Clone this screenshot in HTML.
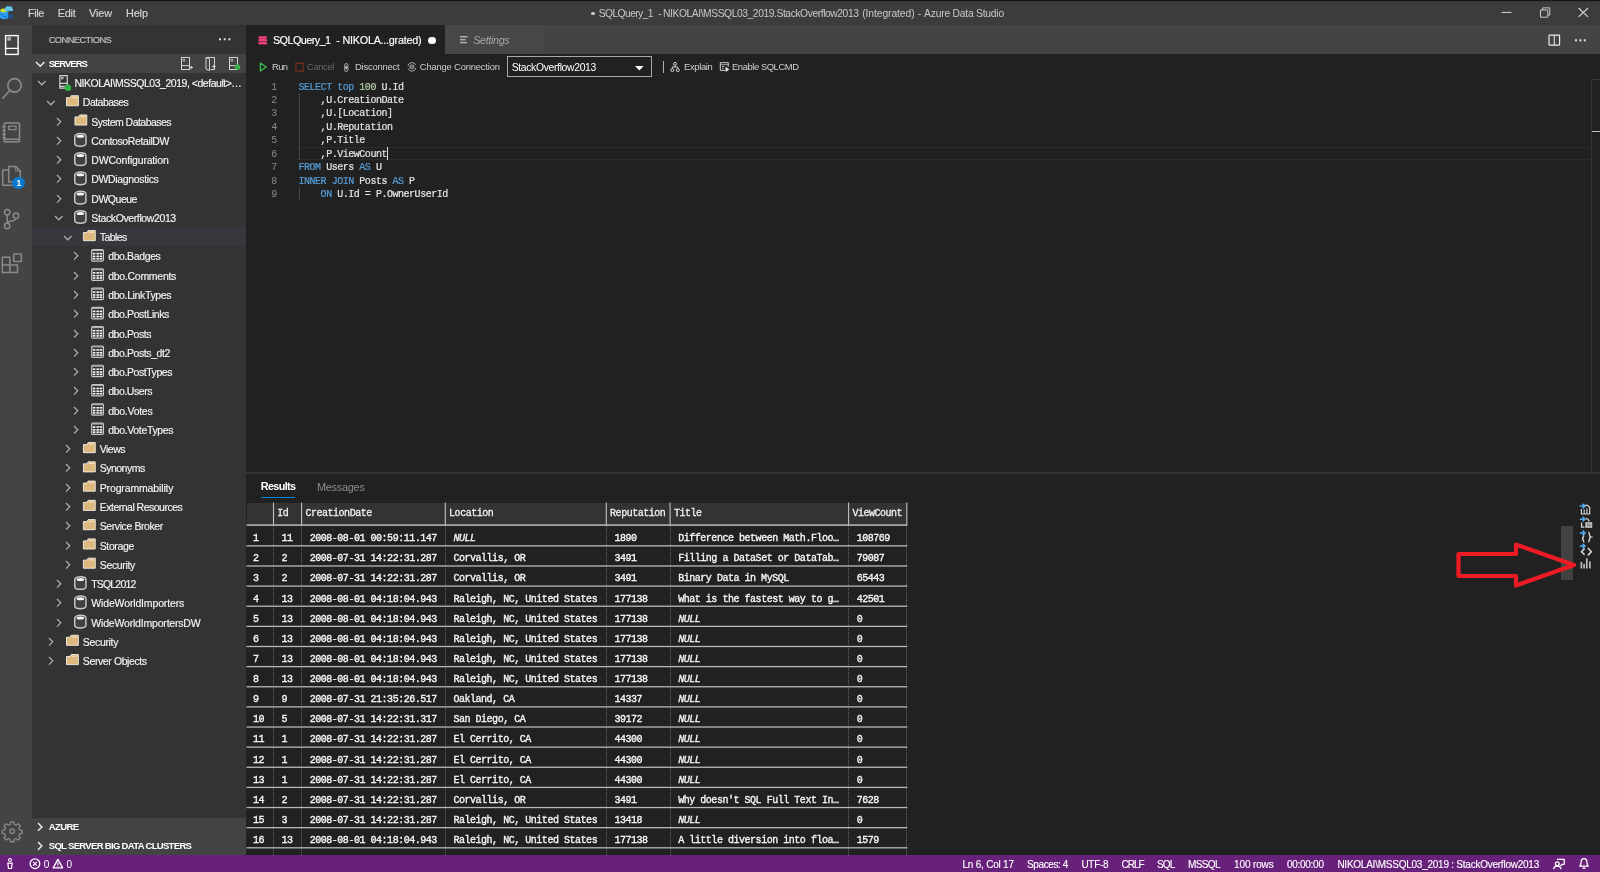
<!DOCTYPE html>
<html lang="en"><head><meta charset="utf-8"><title>Azure Data Studio</title>
<style>
html,body{margin:0;padding:0;background:#212121;}
body{width:1600px;height:872px;position:relative;overflow:hidden;font-family:'Liberation Sans', sans-serif;}
#app{position:absolute;left:0;top:0;width:1600px;height:872px;will-change:transform;}
#app div{position:absolute;box-sizing:border-box;}
#app svg{position:absolute;overflow:visible;}
#app span.t{position:absolute;white-space:pre;line-height:1;}
#app span.m{font-family:'Liberation Mono', monospace;}
</style></head><body><div id="app">
<div style="left:0px;top:0px;width:1600px;height:872px;background:#212121;"></div>
<div style="left:0px;top:0px;width:1600px;height:24.6px;background:#3c3c3c;"></div>
<div style="left:0px;top:0px;width:1600px;height:1px;background:#151515;"></div>
<div style="left:0px;top:1px;width:1600px;height:1px;background:#333333;"></div>
<div style="left:0px;top:24.6px;width:32px;height:830.4px;background:#444444;"></div>
<div style="left:32px;top:24.6px;width:214.2px;height:830.4px;background:#333333;"></div>
<div style="left:32px;top:54px;width:214.3px;height:18.7px;background:#434343;"></div>
<div style="left:246.2px;top:24.5px;width:1353.8px;height:29.1px;background:#444444;"></div>
<div style="left:246.2px;top:24.5px;width:198.9px;height:29.1px;background:#212121;"></div>
<div style="left:445.1px;top:24.5px;width:100.4px;height:29.1px;background:#474747;"></div>
<div style="left:545.2px;top:24.5px;width:1px;height:29.1px;background:#3e3e3e;"></div>
<div style="left:0px;top:854.6px;width:1600px;height:17.4px;background:#68217a;"></div>
<div style="left:591.300px;top:11.600px;width:3.800px;height:3.800px;border-radius:50%;background:#c8c8c8"></div>
<svg style="left:0;top:0" width="1600" height="30" viewBox="0 0 1600 30" fill="none" stroke="#d8d8d8" stroke-width="1"><path d="M1501.700 12.400h9.700"/><path d="M1540.500 10h7.300v7.200h-7.300z M1542.600 10v-2.100h7.200v7.200h-2" stroke-width="0.900" stroke-linejoin="round"/><path d="M1578.600 8l9.400 8.800 M1588 8l-9.400 8.800" stroke-width="1.100"/></svg>
<svg style="left:0;top:0" width="16" height="24" viewBox="0 0 16 24"><path d="M0 11.500v5.800c0 1.200 1.900 1.900 4.100 1.900s4.200-.7 4.200-1.900v-5.800z" fill="#2a9df4"/><ellipse cx="3.700" cy="10.500" rx="3.400" ry="1.900" fill="#d8e61e"/><path d="M0 12c.6 1 2.200 1.400 4.100 1.400s3.600-.4 4.200-1.400v-1.200c-.6 1-2.300 1.500-4.200 1.500s-3.500-.5-4.100-1.500z" fill="#3aa6f5"/><path d="M2 14.300v1.600 M3.500 16.800h3" stroke="#1b62b8" stroke-width="0.900" fill="none"/><path d="M5.600 11c-1.700 0-2-2.300-.3-2.700 0-2.200 2.700-3.200 4-1.700 1.800-1 3.600.4 3.100 2.100 1.300.4 1 2.300-.4 2.300z" fill="#62c1ea"/><path d="M10.600 14l2.200 1.250v2.500l-2.200 1.250-2.200-1.250v-2.500z" fill="#1558b0"/><circle cx="10.600" cy="16.500" r="0.900" fill="#3c3c3c"/></svg>
<svg style="left:0;top:25px" width="32" height="830" viewBox="0 25 32 830" fill="none" stroke="#8a8a8a" stroke-width="1.500" stroke-linejoin="round" stroke-linecap="round"><g stroke="#ffffff" stroke-width="1.400" stroke-linejoin="miter"><rect x="5.600" y="35.600" width="12.500" height="18.800"/><path d="M5.600 48.400h12.500"/><rect x="8" y="37.800" width="2.200" height="2.200" stroke-width="0.800"/></g><circle cx="14.500" cy="85.400" r="6.700" stroke-width="1.700"/><path d="M9.700 90.500L3 98" stroke-width="1.700"/><rect x="4.200" y="123" width="15.300" height="16.300" rx="1.200"/><path d="M4.200 139.300v2.400h15.300v-2.400"/><rect x="8.700" y="126.200" width="7.300" height="3.400" stroke-width="1.300"/><path d="M2.500 126.800h3 M2.500 130.600h3 M2.500 134.400h3 M2.500 137.800h3" stroke-width="1.200"/><path d="M8.700 170v-3.600h7l4.600 4.600v10h-4.300"/><path d="M15.700 166.400v4.600h4.600" stroke-width="1.100"/><path d="M2.700 170h6v12h7.300v3.200h-13.300z"/><circle cx="7.200" cy="212.300" r="2.700"/><circle cx="16" cy="215.800" r="2.700"/><circle cx="7.200" cy="226" r="2.700"/><path d="M7.200 215v8.300 M16 218.500c0 3.300-8.800 1.800-8.800 4.800"/><path d="M2.300 257.300h7.600v7.600h-7.600z M9.900 264.900h7.600v7.600h-7.600z M2.300 264.900v7.600h7.600"/><rect x="13.700" y="253.900" width="7.700" height="7.700" rx="0.600"/></svg>
<div style="left:12.100px;top:176.500px;width:12.800px;height:12.800px;border-radius:50%;background:#0a7ad1"></div>
<svg style="left:1.500px;top:820.700px" width="20.400" height="20.400" viewBox="0 0 22 22" fill="none" stroke="#8a8a8a" stroke-width="1.400"><circle cx="11" cy="11" r="2.400"/><path d="M9.300 1h3.400l.5 2.700 1.900.8 2.300-1.600 2.400 2.400-1.600 2.300.8 1.900 2.700.5v3.400l-2.700.5-.8 1.900 1.600 2.300-2.400 2.400-2.300-1.600-1.900.8-.5 2.700h-3.400l-.5-2.700-1.900-.8-2.300 1.600-2.400-2.400 1.600-2.300-.8-1.900-2.700-.5v-3.400l2.700-.5.8-1.900-1.600-2.300 2.400-2.400 2.300 1.600 1.900-.8z" stroke-linejoin="round"/></svg>
<svg style="left:219px;top:37.500px" width="12" height="3" viewBox="0 0 12 3" fill="#e0e0e0"><rect x="0" y="0.300" width="2" height="2"/><rect x="4.700" y="0.300" width="2" height="2"/><rect x="9.400" y="0.300" width="2" height="2"/></svg>
<svg style="left:34.8px;top:60.5px" width="10.4" height="6.2" viewBox="-5.2 -1 10.4 6.2" fill="none" stroke="#f0f0f0" stroke-width="1.4"><path d="M-4.2 0L0 4.2L4.2 0"/></svg>
<svg style="left:0;top:0" width="1600" height="872" viewBox="0 0 1600 872" fill="none"><rect x="181.5" y="57.5" width="8" height="12" stroke="#d4d4d4" stroke-width="1" fill="none"/><path d="M181.5 65.66h8" stroke="#d4d4d4" stroke-width="1"/><rect x="183.0" y="59.3" width="1.800" height="1.800" stroke="#d4d4d4" stroke-width="0.600" fill="none"/><path d="M189.500 67.500h3.500 M191.200 65.800v3.500" stroke="#d4d4d4" stroke-width="1"/><path d="M206 57.500h8.500v12h-4" stroke="#d4d4d4"/><path d="M206 57.500l3.500 1.500v11.500l-3.500-1.500z" stroke="#d4d4d4"/><path d="M212 66.500h3.800 M213.900 64.600v3.800" stroke="#d4d4d4"/><rect x="229.5" y="57.5" width="8" height="12" stroke="#d4d4d4" stroke-width="1" fill="none"/><path d="M229.5 65.66h8" stroke="#d4d4d4" stroke-width="1"/><rect x="231.0" y="59.3" width="1.800" height="1.800" stroke="#d4d4d4" stroke-width="0.600" fill="none"/><circle cx="237.600" cy="67.300" r="2.700" fill="#3bb44a"/></svg>
<div style="left:32px;top:227.16000000000003px;width:214.2px;height:19.2px;background:#37373d;"></div>
<svg style="left:37.1px;top:80.4px" width="9.6" height="5.8" viewBox="-4.8 -1 9.6 5.8" fill="none" stroke="#b0b0b0" stroke-width="1.2"><path d="M-3.8 0L0 3.8L3.8 0"/></svg>
<svg style="left:45.5px;top:99.7px" width="9.6" height="5.8" viewBox="-4.8 -1 9.6 5.8" fill="none" stroke="#b0b0b0" stroke-width="1.2"><path d="M-3.8 0L0 3.8L3.8 0"/></svg>
<svg style="left:56.3px;top:116.5px" width="5.8" height="9.6" viewBox="-1 -4.8 5.8 9.6" fill="none" stroke="#b0b0b0" stroke-width="1.2"><path d="M0 -3.8L3.8 0L0 3.8"/></svg>
<svg style="left:56.3px;top:135.8px" width="5.8" height="9.6" viewBox="-1 -4.8 5.8 9.6" fill="none" stroke="#b0b0b0" stroke-width="1.2"><path d="M0 -3.8L3.8 0L0 3.8"/></svg>
<svg style="left:56.3px;top:155.1px" width="5.8" height="9.6" viewBox="-1 -4.8 5.8 9.6" fill="none" stroke="#b0b0b0" stroke-width="1.2"><path d="M0 -3.8L3.8 0L0 3.8"/></svg>
<svg style="left:56.3px;top:174.3px" width="5.8" height="9.6" viewBox="-1 -4.8 5.8 9.6" fill="none" stroke="#b0b0b0" stroke-width="1.2"><path d="M0 -3.8L3.8 0L0 3.8"/></svg>
<svg style="left:56.3px;top:193.6px" width="5.8" height="9.6" viewBox="-1 -4.8 5.8 9.6" fill="none" stroke="#b0b0b0" stroke-width="1.2"><path d="M0 -3.8L3.8 0L0 3.8"/></svg>
<svg style="left:54.0px;top:215.3px" width="9.6" height="5.8" viewBox="-4.8 -1 9.6 5.8" fill="none" stroke="#b0b0b0" stroke-width="1.2"><path d="M-3.8 0L0 3.8L3.8 0"/></svg>
<svg style="left:62.5px;top:234.6px" width="9.6" height="5.8" viewBox="-4.8 -1 9.6 5.8" fill="none" stroke="#b0b0b0" stroke-width="1.2"><path d="M-3.8 0L0 3.8L3.8 0"/></svg>
<svg style="left:73.2px;top:251.4px" width="5.8" height="9.6" viewBox="-1 -4.8 5.8 9.6" fill="none" stroke="#b0b0b0" stroke-width="1.2"><path d="M0 -3.8L3.8 0L0 3.8"/></svg>
<svg style="left:73.2px;top:270.7px" width="5.8" height="9.6" viewBox="-1 -4.8 5.8 9.6" fill="none" stroke="#b0b0b0" stroke-width="1.2"><path d="M0 -3.8L3.8 0L0 3.8"/></svg>
<svg style="left:73.2px;top:290.0px" width="5.8" height="9.6" viewBox="-1 -4.8 5.8 9.6" fill="none" stroke="#b0b0b0" stroke-width="1.2"><path d="M0 -3.8L3.8 0L0 3.8"/></svg>
<svg style="left:73.2px;top:309.2px" width="5.8" height="9.6" viewBox="-1 -4.8 5.8 9.6" fill="none" stroke="#b0b0b0" stroke-width="1.2"><path d="M0 -3.8L3.8 0L0 3.8"/></svg>
<svg style="left:73.2px;top:328.5px" width="5.8" height="9.6" viewBox="-1 -4.8 5.8 9.6" fill="none" stroke="#b0b0b0" stroke-width="1.2"><path d="M0 -3.8L3.8 0L0 3.8"/></svg>
<svg style="left:73.2px;top:347.8px" width="5.8" height="9.6" viewBox="-1 -4.8 5.8 9.6" fill="none" stroke="#b0b0b0" stroke-width="1.2"><path d="M0 -3.8L3.8 0L0 3.8"/></svg>
<svg style="left:73.2px;top:367.1px" width="5.8" height="9.6" viewBox="-1 -4.8 5.8 9.6" fill="none" stroke="#b0b0b0" stroke-width="1.2"><path d="M0 -3.8L3.8 0L0 3.8"/></svg>
<svg style="left:73.2px;top:386.3px" width="5.8" height="9.6" viewBox="-1 -4.8 5.8 9.6" fill="none" stroke="#b0b0b0" stroke-width="1.2"><path d="M0 -3.8L3.8 0L0 3.8"/></svg>
<svg style="left:73.2px;top:405.6px" width="5.8" height="9.6" viewBox="-1 -4.8 5.8 9.6" fill="none" stroke="#b0b0b0" stroke-width="1.2"><path d="M0 -3.8L3.8 0L0 3.8"/></svg>
<svg style="left:73.2px;top:424.9px" width="5.8" height="9.6" viewBox="-1 -4.8 5.8 9.6" fill="none" stroke="#b0b0b0" stroke-width="1.2"><path d="M0 -3.8L3.8 0L0 3.8"/></svg>
<svg style="left:64.8px;top:444.1px" width="5.8" height="9.6" viewBox="-1 -4.8 5.8 9.6" fill="none" stroke="#b0b0b0" stroke-width="1.2"><path d="M0 -3.8L3.8 0L0 3.8"/></svg>
<svg style="left:64.8px;top:463.4px" width="5.8" height="9.6" viewBox="-1 -4.8 5.8 9.6" fill="none" stroke="#b0b0b0" stroke-width="1.2"><path d="M0 -3.8L3.8 0L0 3.8"/></svg>
<svg style="left:64.8px;top:482.7px" width="5.8" height="9.6" viewBox="-1 -4.8 5.8 9.6" fill="none" stroke="#b0b0b0" stroke-width="1.2"><path d="M0 -3.8L3.8 0L0 3.8"/></svg>
<svg style="left:64.8px;top:501.9px" width="5.8" height="9.6" viewBox="-1 -4.8 5.8 9.6" fill="none" stroke="#b0b0b0" stroke-width="1.2"><path d="M0 -3.8L3.8 0L0 3.8"/></svg>
<svg style="left:64.8px;top:521.2px" width="5.8" height="9.6" viewBox="-1 -4.8 5.8 9.6" fill="none" stroke="#b0b0b0" stroke-width="1.2"><path d="M0 -3.8L3.8 0L0 3.8"/></svg>
<svg style="left:64.8px;top:540.5px" width="5.8" height="9.6" viewBox="-1 -4.8 5.8 9.6" fill="none" stroke="#b0b0b0" stroke-width="1.2"><path d="M0 -3.8L3.8 0L0 3.8"/></svg>
<svg style="left:64.8px;top:559.8px" width="5.8" height="9.6" viewBox="-1 -4.8 5.8 9.6" fill="none" stroke="#b0b0b0" stroke-width="1.2"><path d="M0 -3.8L3.8 0L0 3.8"/></svg>
<svg style="left:56.3px;top:579.0px" width="5.8" height="9.6" viewBox="-1 -4.8 5.8 9.6" fill="none" stroke="#b0b0b0" stroke-width="1.2"><path d="M0 -3.8L3.8 0L0 3.8"/></svg>
<svg style="left:56.3px;top:598.3px" width="5.8" height="9.6" viewBox="-1 -4.8 5.8 9.6" fill="none" stroke="#b0b0b0" stroke-width="1.2"><path d="M0 -3.8L3.8 0L0 3.8"/></svg>
<svg style="left:56.3px;top:617.6px" width="5.8" height="9.6" viewBox="-1 -4.8 5.8 9.6" fill="none" stroke="#b0b0b0" stroke-width="1.2"><path d="M0 -3.8L3.8 0L0 3.8"/></svg>
<svg style="left:47.8px;top:636.8px" width="5.8" height="9.6" viewBox="-1 -4.8 5.8 9.6" fill="none" stroke="#b0b0b0" stroke-width="1.2"><path d="M0 -3.8L3.8 0L0 3.8"/></svg>
<svg style="left:47.8px;top:656.1px" width="5.8" height="9.6" viewBox="-1 -4.8 5.8 9.6" fill="none" stroke="#b0b0b0" stroke-width="1.2"><path d="M0 -3.8L3.8 0L0 3.8"/></svg>
<svg style="left:0;top:0" width="1600" height="872" viewBox="0 0 1600 872"><g transform="translate(59.25,75.00)" fill="none" stroke="#d4d4d4" stroke-width="1.200"><path d="M0.600 0.600h7.400v12.600h-7.400z"/><path d="M0.600 8.300h7.400 M0.600 11.400h5" /><rect x="2.200" y="2.300" width="1.600" height="1.600" stroke-width="0.700"/><circle cx="8.700" cy="12.800" r="3.300" fill="#2fb344" stroke="none"/></g><g transform="translate(66.20,95.37)"><path d="M0.300 2.300H3.900L5 0.300H12.150V10.400H0.300Z" fill="#deb97d" stroke="#f4f0e8" stroke-width="0.900" stroke-linejoin="round"/><path d="M5.900 2h4.700" stroke="#fbf4e6" stroke-width="0.800" fill="none"/></g><g transform="translate(74.65,114.64)"><path d="M0.300 2.300H3.900L5 0.300H12.150V10.400H0.300Z" fill="#deb97d" stroke="#f4f0e8" stroke-width="0.900" stroke-linejoin="round"/><path d="M5.900 2h4.700" stroke="#fbf4e6" stroke-width="0.800" fill="none"/></g><g transform="translate(74.00,132.81)"><path d="M0.750 3.400A5.600 2.650 0 0 1 11.950 3.400V10.700A5.600 2.650 0 0 1 0.750 10.700Z" fill="#414141" stroke="#c6c6c6" stroke-width="1.500"/><ellipse cx="6.350" cy="3.500" rx="3.800" ry="1.500" fill="#f8f8f8"/></g><g transform="translate(74.00,152.08)"><path d="M0.750 3.400A5.600 2.650 0 0 1 11.950 3.400V10.700A5.600 2.650 0 0 1 0.750 10.700Z" fill="#414141" stroke="#c6c6c6" stroke-width="1.500"/><ellipse cx="6.350" cy="3.500" rx="3.800" ry="1.500" fill="#f8f8f8"/></g><g transform="translate(74.00,171.35)"><path d="M0.750 3.400A5.600 2.650 0 0 1 11.950 3.400V10.700A5.600 2.650 0 0 1 0.750 10.700Z" fill="#414141" stroke="#c6c6c6" stroke-width="1.500"/><ellipse cx="6.350" cy="3.500" rx="3.800" ry="1.500" fill="#f8f8f8"/></g><g transform="translate(74.00,190.62)"><path d="M0.750 3.400A5.600 2.650 0 0 1 11.950 3.400V10.700A5.600 2.650 0 0 1 0.750 10.700Z" fill="#414141" stroke="#c6c6c6" stroke-width="1.500"/><ellipse cx="6.350" cy="3.500" rx="3.800" ry="1.500" fill="#f8f8f8"/></g><g transform="translate(74.00,209.89)"><path d="M0.750 3.400A5.600 2.650 0 0 1 11.950 3.400V10.700A5.600 2.650 0 0 1 0.750 10.700Z" fill="#414141" stroke="#c6c6c6" stroke-width="1.500"/><ellipse cx="6.350" cy="3.500" rx="3.800" ry="1.500" fill="#f8f8f8"/></g><g transform="translate(83.10,230.26)"><path d="M0.300 2.300H3.900L5 0.300H12.150V10.400H0.300Z" fill="#deb97d" stroke="#f4f0e8" stroke-width="0.900" stroke-linejoin="round"/><path d="M5.900 2h4.700" stroke="#fbf4e6" stroke-width="0.800" fill="none"/></g><g transform="translate(91.10,248.93)" fill="none" stroke="#c8c8c8" stroke-width="1.200"><rect x="0.600" y="0.700" width="11.700" height="11.400" rx="1.100"/><path d="M0.600 1.600h11.700" stroke-width="1.100" stroke="#b8b8b8"/><rect x="1.600" y="3.90" width="9.800" height="1.500" fill="#7a7a7a" stroke="none"/><rect x="1.600" y="6.70" width="9.800" height="1.500" fill="#7a7a7a" stroke="none"/><rect x="1.600" y="9.10" width="9.800" height="1.500" fill="#7a7a7a" stroke="none"/><rect x="1.80" y="3.90" width="2.200" height="1.500" fill="#fafafa" stroke="none"/><rect x="5.55" y="3.90" width="2.200" height="1.500" fill="#fafafa" stroke="none"/><rect x="8.80" y="3.90" width="2.200" height="1.500" fill="#fafafa" stroke="none"/><rect x="1.80" y="6.70" width="2.200" height="1.500" fill="#fafafa" stroke="none"/><rect x="5.55" y="6.70" width="2.200" height="1.500" fill="#fafafa" stroke="none"/><rect x="8.80" y="6.70" width="2.200" height="1.500" fill="#fafafa" stroke="none"/><rect x="1.80" y="9.10" width="2.200" height="1.500" fill="#fafafa" stroke="none"/><rect x="5.55" y="9.10" width="2.200" height="1.500" fill="#fafafa" stroke="none"/><rect x="8.80" y="9.10" width="2.200" height="1.500" fill="#fafafa" stroke="none"/></g><g transform="translate(91.10,268.20)" fill="none" stroke="#c8c8c8" stroke-width="1.200"><rect x="0.600" y="0.700" width="11.700" height="11.400" rx="1.100"/><path d="M0.600 1.600h11.700" stroke-width="1.100" stroke="#b8b8b8"/><rect x="1.600" y="3.90" width="9.800" height="1.500" fill="#7a7a7a" stroke="none"/><rect x="1.600" y="6.70" width="9.800" height="1.500" fill="#7a7a7a" stroke="none"/><rect x="1.600" y="9.10" width="9.800" height="1.500" fill="#7a7a7a" stroke="none"/><rect x="1.80" y="3.90" width="2.200" height="1.500" fill="#fafafa" stroke="none"/><rect x="5.55" y="3.90" width="2.200" height="1.500" fill="#fafafa" stroke="none"/><rect x="8.80" y="3.90" width="2.200" height="1.500" fill="#fafafa" stroke="none"/><rect x="1.80" y="6.70" width="2.200" height="1.500" fill="#fafafa" stroke="none"/><rect x="5.55" y="6.70" width="2.200" height="1.500" fill="#fafafa" stroke="none"/><rect x="8.80" y="6.70" width="2.200" height="1.500" fill="#fafafa" stroke="none"/><rect x="1.80" y="9.10" width="2.200" height="1.500" fill="#fafafa" stroke="none"/><rect x="5.55" y="9.10" width="2.200" height="1.500" fill="#fafafa" stroke="none"/><rect x="8.80" y="9.10" width="2.200" height="1.500" fill="#fafafa" stroke="none"/></g><g transform="translate(91.10,287.47)" fill="none" stroke="#c8c8c8" stroke-width="1.200"><rect x="0.600" y="0.700" width="11.700" height="11.400" rx="1.100"/><path d="M0.600 1.600h11.700" stroke-width="1.100" stroke="#b8b8b8"/><rect x="1.600" y="3.90" width="9.800" height="1.500" fill="#7a7a7a" stroke="none"/><rect x="1.600" y="6.70" width="9.800" height="1.500" fill="#7a7a7a" stroke="none"/><rect x="1.600" y="9.10" width="9.800" height="1.500" fill="#7a7a7a" stroke="none"/><rect x="1.80" y="3.90" width="2.200" height="1.500" fill="#fafafa" stroke="none"/><rect x="5.55" y="3.90" width="2.200" height="1.500" fill="#fafafa" stroke="none"/><rect x="8.80" y="3.90" width="2.200" height="1.500" fill="#fafafa" stroke="none"/><rect x="1.80" y="6.70" width="2.200" height="1.500" fill="#fafafa" stroke="none"/><rect x="5.55" y="6.70" width="2.200" height="1.500" fill="#fafafa" stroke="none"/><rect x="8.80" y="6.70" width="2.200" height="1.500" fill="#fafafa" stroke="none"/><rect x="1.80" y="9.10" width="2.200" height="1.500" fill="#fafafa" stroke="none"/><rect x="5.55" y="9.10" width="2.200" height="1.500" fill="#fafafa" stroke="none"/><rect x="8.80" y="9.10" width="2.200" height="1.500" fill="#fafafa" stroke="none"/></g><g transform="translate(91.10,306.74)" fill="none" stroke="#c8c8c8" stroke-width="1.200"><rect x="0.600" y="0.700" width="11.700" height="11.400" rx="1.100"/><path d="M0.600 1.600h11.700" stroke-width="1.100" stroke="#b8b8b8"/><rect x="1.600" y="3.90" width="9.800" height="1.500" fill="#7a7a7a" stroke="none"/><rect x="1.600" y="6.70" width="9.800" height="1.500" fill="#7a7a7a" stroke="none"/><rect x="1.600" y="9.10" width="9.800" height="1.500" fill="#7a7a7a" stroke="none"/><rect x="1.80" y="3.90" width="2.200" height="1.500" fill="#fafafa" stroke="none"/><rect x="5.55" y="3.90" width="2.200" height="1.500" fill="#fafafa" stroke="none"/><rect x="8.80" y="3.90" width="2.200" height="1.500" fill="#fafafa" stroke="none"/><rect x="1.80" y="6.70" width="2.200" height="1.500" fill="#fafafa" stroke="none"/><rect x="5.55" y="6.70" width="2.200" height="1.500" fill="#fafafa" stroke="none"/><rect x="8.80" y="6.70" width="2.200" height="1.500" fill="#fafafa" stroke="none"/><rect x="1.80" y="9.10" width="2.200" height="1.500" fill="#fafafa" stroke="none"/><rect x="5.55" y="9.10" width="2.200" height="1.500" fill="#fafafa" stroke="none"/><rect x="8.80" y="9.10" width="2.200" height="1.500" fill="#fafafa" stroke="none"/></g><g transform="translate(91.10,326.01)" fill="none" stroke="#c8c8c8" stroke-width="1.200"><rect x="0.600" y="0.700" width="11.700" height="11.400" rx="1.100"/><path d="M0.600 1.600h11.700" stroke-width="1.100" stroke="#b8b8b8"/><rect x="1.600" y="3.90" width="9.800" height="1.500" fill="#7a7a7a" stroke="none"/><rect x="1.600" y="6.70" width="9.800" height="1.500" fill="#7a7a7a" stroke="none"/><rect x="1.600" y="9.10" width="9.800" height="1.500" fill="#7a7a7a" stroke="none"/><rect x="1.80" y="3.90" width="2.200" height="1.500" fill="#fafafa" stroke="none"/><rect x="5.55" y="3.90" width="2.200" height="1.500" fill="#fafafa" stroke="none"/><rect x="8.80" y="3.90" width="2.200" height="1.500" fill="#fafafa" stroke="none"/><rect x="1.80" y="6.70" width="2.200" height="1.500" fill="#fafafa" stroke="none"/><rect x="5.55" y="6.70" width="2.200" height="1.500" fill="#fafafa" stroke="none"/><rect x="8.80" y="6.70" width="2.200" height="1.500" fill="#fafafa" stroke="none"/><rect x="1.80" y="9.10" width="2.200" height="1.500" fill="#fafafa" stroke="none"/><rect x="5.55" y="9.10" width="2.200" height="1.500" fill="#fafafa" stroke="none"/><rect x="8.80" y="9.10" width="2.200" height="1.500" fill="#fafafa" stroke="none"/></g><g transform="translate(91.10,345.28)" fill="none" stroke="#c8c8c8" stroke-width="1.200"><rect x="0.600" y="0.700" width="11.700" height="11.400" rx="1.100"/><path d="M0.600 1.600h11.700" stroke-width="1.100" stroke="#b8b8b8"/><rect x="1.600" y="3.90" width="9.800" height="1.500" fill="#7a7a7a" stroke="none"/><rect x="1.600" y="6.70" width="9.800" height="1.500" fill="#7a7a7a" stroke="none"/><rect x="1.600" y="9.10" width="9.800" height="1.500" fill="#7a7a7a" stroke="none"/><rect x="1.80" y="3.90" width="2.200" height="1.500" fill="#fafafa" stroke="none"/><rect x="5.55" y="3.90" width="2.200" height="1.500" fill="#fafafa" stroke="none"/><rect x="8.80" y="3.90" width="2.200" height="1.500" fill="#fafafa" stroke="none"/><rect x="1.80" y="6.70" width="2.200" height="1.500" fill="#fafafa" stroke="none"/><rect x="5.55" y="6.70" width="2.200" height="1.500" fill="#fafafa" stroke="none"/><rect x="8.80" y="6.70" width="2.200" height="1.500" fill="#fafafa" stroke="none"/><rect x="1.80" y="9.10" width="2.200" height="1.500" fill="#fafafa" stroke="none"/><rect x="5.55" y="9.10" width="2.200" height="1.500" fill="#fafafa" stroke="none"/><rect x="8.80" y="9.10" width="2.200" height="1.500" fill="#fafafa" stroke="none"/></g><g transform="translate(91.10,364.55)" fill="none" stroke="#c8c8c8" stroke-width="1.200"><rect x="0.600" y="0.700" width="11.700" height="11.400" rx="1.100"/><path d="M0.600 1.600h11.700" stroke-width="1.100" stroke="#b8b8b8"/><rect x="1.600" y="3.90" width="9.800" height="1.500" fill="#7a7a7a" stroke="none"/><rect x="1.600" y="6.70" width="9.800" height="1.500" fill="#7a7a7a" stroke="none"/><rect x="1.600" y="9.10" width="9.800" height="1.500" fill="#7a7a7a" stroke="none"/><rect x="1.80" y="3.90" width="2.200" height="1.500" fill="#fafafa" stroke="none"/><rect x="5.55" y="3.90" width="2.200" height="1.500" fill="#fafafa" stroke="none"/><rect x="8.80" y="3.90" width="2.200" height="1.500" fill="#fafafa" stroke="none"/><rect x="1.80" y="6.70" width="2.200" height="1.500" fill="#fafafa" stroke="none"/><rect x="5.55" y="6.70" width="2.200" height="1.500" fill="#fafafa" stroke="none"/><rect x="8.80" y="6.70" width="2.200" height="1.500" fill="#fafafa" stroke="none"/><rect x="1.80" y="9.10" width="2.200" height="1.500" fill="#fafafa" stroke="none"/><rect x="5.55" y="9.10" width="2.200" height="1.500" fill="#fafafa" stroke="none"/><rect x="8.80" y="9.10" width="2.200" height="1.500" fill="#fafafa" stroke="none"/></g><g transform="translate(91.10,383.82)" fill="none" stroke="#c8c8c8" stroke-width="1.200"><rect x="0.600" y="0.700" width="11.700" height="11.400" rx="1.100"/><path d="M0.600 1.600h11.700" stroke-width="1.100" stroke="#b8b8b8"/><rect x="1.600" y="3.90" width="9.800" height="1.500" fill="#7a7a7a" stroke="none"/><rect x="1.600" y="6.70" width="9.800" height="1.500" fill="#7a7a7a" stroke="none"/><rect x="1.600" y="9.10" width="9.800" height="1.500" fill="#7a7a7a" stroke="none"/><rect x="1.80" y="3.90" width="2.200" height="1.500" fill="#fafafa" stroke="none"/><rect x="5.55" y="3.90" width="2.200" height="1.500" fill="#fafafa" stroke="none"/><rect x="8.80" y="3.90" width="2.200" height="1.500" fill="#fafafa" stroke="none"/><rect x="1.80" y="6.70" width="2.200" height="1.500" fill="#fafafa" stroke="none"/><rect x="5.55" y="6.70" width="2.200" height="1.500" fill="#fafafa" stroke="none"/><rect x="8.80" y="6.70" width="2.200" height="1.500" fill="#fafafa" stroke="none"/><rect x="1.80" y="9.10" width="2.200" height="1.500" fill="#fafafa" stroke="none"/><rect x="5.55" y="9.10" width="2.200" height="1.500" fill="#fafafa" stroke="none"/><rect x="8.80" y="9.10" width="2.200" height="1.500" fill="#fafafa" stroke="none"/></g><g transform="translate(91.10,403.09)" fill="none" stroke="#c8c8c8" stroke-width="1.200"><rect x="0.600" y="0.700" width="11.700" height="11.400" rx="1.100"/><path d="M0.600 1.600h11.700" stroke-width="1.100" stroke="#b8b8b8"/><rect x="1.600" y="3.90" width="9.800" height="1.500" fill="#7a7a7a" stroke="none"/><rect x="1.600" y="6.70" width="9.800" height="1.500" fill="#7a7a7a" stroke="none"/><rect x="1.600" y="9.10" width="9.800" height="1.500" fill="#7a7a7a" stroke="none"/><rect x="1.80" y="3.90" width="2.200" height="1.500" fill="#fafafa" stroke="none"/><rect x="5.55" y="3.90" width="2.200" height="1.500" fill="#fafafa" stroke="none"/><rect x="8.80" y="3.90" width="2.200" height="1.500" fill="#fafafa" stroke="none"/><rect x="1.80" y="6.70" width="2.200" height="1.500" fill="#fafafa" stroke="none"/><rect x="5.55" y="6.70" width="2.200" height="1.500" fill="#fafafa" stroke="none"/><rect x="8.80" y="6.70" width="2.200" height="1.500" fill="#fafafa" stroke="none"/><rect x="1.80" y="9.10" width="2.200" height="1.500" fill="#fafafa" stroke="none"/><rect x="5.55" y="9.10" width="2.200" height="1.500" fill="#fafafa" stroke="none"/><rect x="8.80" y="9.10" width="2.200" height="1.500" fill="#fafafa" stroke="none"/></g><g transform="translate(91.10,422.36)" fill="none" stroke="#c8c8c8" stroke-width="1.200"><rect x="0.600" y="0.700" width="11.700" height="11.400" rx="1.100"/><path d="M0.600 1.600h11.700" stroke-width="1.100" stroke="#b8b8b8"/><rect x="1.600" y="3.90" width="9.800" height="1.500" fill="#7a7a7a" stroke="none"/><rect x="1.600" y="6.70" width="9.800" height="1.500" fill="#7a7a7a" stroke="none"/><rect x="1.600" y="9.10" width="9.800" height="1.500" fill="#7a7a7a" stroke="none"/><rect x="1.80" y="3.90" width="2.200" height="1.500" fill="#fafafa" stroke="none"/><rect x="5.55" y="3.90" width="2.200" height="1.500" fill="#fafafa" stroke="none"/><rect x="8.80" y="3.90" width="2.200" height="1.500" fill="#fafafa" stroke="none"/><rect x="1.80" y="6.70" width="2.200" height="1.500" fill="#fafafa" stroke="none"/><rect x="5.55" y="6.70" width="2.200" height="1.500" fill="#fafafa" stroke="none"/><rect x="8.80" y="6.70" width="2.200" height="1.500" fill="#fafafa" stroke="none"/><rect x="1.80" y="9.10" width="2.200" height="1.500" fill="#fafafa" stroke="none"/><rect x="5.55" y="9.10" width="2.200" height="1.500" fill="#fafafa" stroke="none"/><rect x="8.80" y="9.10" width="2.200" height="1.500" fill="#fafafa" stroke="none"/></g><g transform="translate(83.10,442.23)"><path d="M0.300 2.300H3.900L5 0.300H12.150V10.400H0.300Z" fill="#deb97d" stroke="#f4f0e8" stroke-width="0.900" stroke-linejoin="round"/><path d="M5.900 2h4.700" stroke="#fbf4e6" stroke-width="0.800" fill="none"/></g><g transform="translate(83.10,461.50)"><path d="M0.300 2.300H3.900L5 0.300H12.150V10.400H0.300Z" fill="#deb97d" stroke="#f4f0e8" stroke-width="0.900" stroke-linejoin="round"/><path d="M5.900 2h4.700" stroke="#fbf4e6" stroke-width="0.800" fill="none"/></g><g transform="translate(83.10,480.77)"><path d="M0.300 2.300H3.900L5 0.300H12.150V10.400H0.300Z" fill="#deb97d" stroke="#f4f0e8" stroke-width="0.900" stroke-linejoin="round"/><path d="M5.900 2h4.700" stroke="#fbf4e6" stroke-width="0.800" fill="none"/></g><g transform="translate(83.10,500.04)"><path d="M0.300 2.300H3.900L5 0.300H12.150V10.400H0.300Z" fill="#deb97d" stroke="#f4f0e8" stroke-width="0.900" stroke-linejoin="round"/><path d="M5.900 2h4.700" stroke="#fbf4e6" stroke-width="0.800" fill="none"/></g><g transform="translate(83.10,519.31)"><path d="M0.300 2.300H3.900L5 0.300H12.150V10.400H0.300Z" fill="#deb97d" stroke="#f4f0e8" stroke-width="0.900" stroke-linejoin="round"/><path d="M5.900 2h4.700" stroke="#fbf4e6" stroke-width="0.800" fill="none"/></g><g transform="translate(83.10,538.58)"><path d="M0.300 2.300H3.900L5 0.300H12.150V10.400H0.300Z" fill="#deb97d" stroke="#f4f0e8" stroke-width="0.900" stroke-linejoin="round"/><path d="M5.900 2h4.700" stroke="#fbf4e6" stroke-width="0.800" fill="none"/></g><g transform="translate(83.10,557.85)"><path d="M0.300 2.300H3.900L5 0.300H12.150V10.400H0.300Z" fill="#deb97d" stroke="#f4f0e8" stroke-width="0.900" stroke-linejoin="round"/><path d="M5.900 2h4.700" stroke="#fbf4e6" stroke-width="0.800" fill="none"/></g><g transform="translate(74.00,576.02)"><path d="M0.750 3.400A5.600 2.650 0 0 1 11.950 3.400V10.700A5.600 2.650 0 0 1 0.750 10.700Z" fill="#414141" stroke="#c6c6c6" stroke-width="1.500"/><ellipse cx="6.350" cy="3.500" rx="3.800" ry="1.500" fill="#f8f8f8"/></g><g transform="translate(74.00,595.29)"><path d="M0.750 3.400A5.600 2.650 0 0 1 11.950 3.400V10.700A5.600 2.650 0 0 1 0.750 10.700Z" fill="#414141" stroke="#c6c6c6" stroke-width="1.500"/><ellipse cx="6.350" cy="3.500" rx="3.800" ry="1.500" fill="#f8f8f8"/></g><g transform="translate(74.00,614.56)"><path d="M0.750 3.400A5.600 2.650 0 0 1 11.950 3.400V10.700A5.600 2.650 0 0 1 0.750 10.700Z" fill="#414141" stroke="#c6c6c6" stroke-width="1.500"/><ellipse cx="6.350" cy="3.500" rx="3.800" ry="1.500" fill="#f8f8f8"/></g><g transform="translate(66.20,634.93)"><path d="M0.300 2.300H3.900L5 0.300H12.150V10.400H0.300Z" fill="#deb97d" stroke="#f4f0e8" stroke-width="0.900" stroke-linejoin="round"/><path d="M5.900 2h4.700" stroke="#fbf4e6" stroke-width="0.800" fill="none"/></g><g transform="translate(66.20,654.20)"><path d="M0.300 2.300H3.900L5 0.300H12.150V10.400H0.300Z" fill="#deb97d" stroke="#f4f0e8" stroke-width="0.900" stroke-linejoin="round"/><path d="M5.900 2h4.700" stroke="#fbf4e6" stroke-width="0.800" fill="none"/></g></svg>
<div style="left:32px;top:817.6px;width:214.2px;height:37.2px;background:#434343;"></div>
<svg style="left:37.0px;top:822.3px" width="5.9" height="9.8" viewBox="-1 -4.9 5.9 9.8" fill="none" stroke="#f0f0f0" stroke-width="1.4"><path d="M0 -3.9L3.9 0L0 3.9"/></svg>
<svg style="left:37.0px;top:840.9px" width="5.9" height="9.8" viewBox="-1 -4.9 5.9 9.8" fill="none" stroke="#f0f0f0" stroke-width="1.4"><path d="M0 -3.9L3.9 0L0 3.9"/></svg>
<svg style="left:257.500px;top:35.500px" width="10" height="9" viewBox="0 0 10 9" fill="#f0407a"><rect x="0.300" y="0.200" width="8.800" height="2.500" rx="1.250"/><rect x="0.300" y="3.100" width="8.800" height="2.500" rx="1.250"/><rect x="0.300" y="6" width="8.800" height="2.500" rx="1.250"/></svg>
<div style="left:428.400px;top:36.500px;width:7.200px;height:7.200px;border-radius:50%;background:#ffffff"></div>
<svg style="left:460px;top:36.300px" width="8" height="8" viewBox="0 0 8 8" fill="#b0b0b0"><rect x="0" y="0" width="7.500" height="1.500"/><rect x="0" y="2.900" width="5.500" height="1.500"/><rect x="0" y="5.800" width="7" height="1.500"/></svg>
<svg style="left:1548px;top:33.500px" width="13" height="12" viewBox="0 0 13 12" fill="none" stroke="#ececec" stroke-width="1.200"><rect x="1" y="1.100" width="10.600" height="10" rx="0.800"/><path d="M6.300 1.100v10" stroke-width="1"/></svg>
<svg style="left:1575px;top:38.500px" width="12" height="3" viewBox="0 0 12 3" fill="#e0e0e0"><rect x="0" y="0.300" width="2" height="2"/><rect x="4.400" y="0.300" width="2" height="2"/><rect x="8.800" y="0.300" width="2" height="2"/></svg>
<svg style="left:259.300px;top:62.100px" width="9.200" height="10.100" viewBox="0 0 10 11" fill="none" stroke="#3cb64e" stroke-width="1.500" stroke-linejoin="round"><path d="M1.500 1.300v8.400l6.500-4.200z"/></svg>
<svg style="left:0;top:0" width="400" height="100" viewBox="0 0 400 100" fill="none"><rect x="295.900" y="63.200" width="7.500" height="7.800" stroke="#6a2b1b" stroke-width="1.500"/></svg>
<svg style="left:343.200px;top:62.700px" width="6.600" height="9.100" viewBox="0 0 8 11" fill="none" stroke="#d0d0d0" stroke-width="0.900"><rect x="2" y="0.600" width="4" height="6" rx="2"/><rect x="2" y="4.400" width="4" height="6" rx="2"/><path d="M4 3v5"/></svg>
<svg style="left:406.900px;top:62.200px" width="9.800" height="9.800" viewBox="0 0 11 11" fill="none" stroke="#c8c8c8" stroke-width="0.900"><path d="M1 4.500a4.600 4.600 0 0 1 8.800-1 M10 6.500a4.600 4.600 0 0 1-8.800 1"/><circle cx="5.500" cy="5.500" r="2.300"/><path d="M3.500 5.500h4"/></svg>
<div style="left:507px;top:56.200px;width:145px;height:21.300px;border:1px solid #a8a8a8;background:#212121"></div>
<svg style="left:635px;top:65.500px" width="9" height="5" viewBox="0 0 9 5" fill="#ffffff"><path d="M0 0h8.600l-4.300 4.600z"/></svg>
<div style="left:662.9px;top:61px;width:1px;height:11.6px;background:#b0b0b0;"></div>
<svg style="left:0;top:0" width="1600" height="100" viewBox="0 0 1600 100" fill="none" stroke="#d0d0d0" stroke-width="1"><circle cx="675" cy="63.900" r="1.500"/><circle cx="672.300" cy="70.100" r="1.500"/><circle cx="677.800" cy="70.100" r="1.500"/><path d="M675 65.400v1.600 M672.300 68.600v-1.600h5.500v1.600"/></svg>
<svg style="left:0;top:0" width="1600" height="100" viewBox="0 0 1600 100" fill="none" stroke="#d0d0d0" stroke-width="1"><path d="M725 70.400h-4.700v-7.700h8v4"/><path d="M720.300 64.700h8" stroke-width="0.800"/><path d="M722 66.500h2.300 M722 68.300h1.800" stroke-width="0.800"/><path d="M725.800 67.300l3.300 2.100-3.300 2.100z" fill="#f0f0f0" stroke="#f0f0f0" stroke-width="0.500"/></svg>
<div style="left:298px;top:146.8px;width:1293px;height:1px;background:#2c2c2c;"></div>
<div style="left:298px;top:158.7px;width:1293px;height:1px;background:#2c2c2c;"></div>
<div style="left:298.5px;top:92.9px;width:1.1px;height:67px;background:#464646;"></div>
<div style="left:298.5px;top:186.7px;width:1.1px;height:13.4px;background:#464646;"></div>
<div style="left:387.4px;top:147.3px;width:1px;height:12.4px;background:#e0e0e0;"></div>
<div style="left:1591px;top:79px;width:1px;height:393px;background:#363636;"></div>
<div style="left:1591px;top:79px;width:9px;height:1px;background:#363636;"></div>
<div style="left:1591.5px;top:130.7px;width:8.5px;height:1.3px;background:#bdbdbd;"></div>
<div style="left:246.2px;top:472px;width:1353.8px;height:1.6px;background:#343434;"></div>
<div style="left:260.7px;top:496.8px;width:34.4px;height:1.7px;background:#0a84d8;"></div>
<div style="left:246.5px;top:502.5px;width:660.3px;height:22.5px;background:#333333;"></div>
<div style="left:273.0px;top:525.800px;width:0;height:329.20000000000005px;border-left:1px dotted #666666"></div>
<div style="left:301.1px;top:525.800px;width:0;height:329.20000000000005px;border-left:1px dotted #666666"></div>
<div style="left:444.8px;top:525.800px;width:0;height:329.20000000000005px;border-left:1px dotted #666666"></div>
<div style="left:605.8px;top:525.800px;width:0;height:329.20000000000005px;border-left:1px dotted #666666"></div>
<div style="left:669.6px;top:525.800px;width:0;height:329.20000000000005px;border-left:1px dotted #666666"></div>
<div style="left:848.1px;top:525.800px;width:0;height:329.20000000000005px;border-left:1px dotted #666666"></div>
<div style="left:906.3px;top:525.800px;width:0;height:329.20000000000005px;border-left:1px dotted #666666"></div>
<svg style="left:0;top:0" width="1600" height="872" viewBox="0 0 1600 872"><rect x="246.5" y="524.400" width="660.8" height="1.400" fill="#c4c4c4"/><rect x="272.95" y="502.500" width="1.100" height="22.500" fill="#c0c0c0"/><rect x="301.05" y="502.500" width="1.100" height="22.500" fill="#c0c0c0"/><rect x="444.75" y="502.500" width="1.100" height="22.500" fill="#c0c0c0"/><rect x="605.75" y="502.500" width="1.100" height="22.500" fill="#c0c0c0"/><rect x="669.55" y="502.500" width="1.100" height="22.500" fill="#c0c0c0"/><rect x="848.05" y="502.500" width="1.100" height="22.500" fill="#c0c0c0"/><rect x="906.25" y="502.500" width="1.100" height="22.500" fill="#c0c0c0"/><rect x="246.5" y="545.20" width="660.8" height="1.300" fill="#b8b8b8"/><rect x="246.5" y="565.33" width="660.8" height="1.300" fill="#b8b8b8"/><rect x="246.5" y="585.46" width="660.8" height="1.300" fill="#b8b8b8"/><rect x="246.5" y="605.59" width="660.8" height="1.300" fill="#b8b8b8"/><rect x="246.5" y="625.72" width="660.8" height="1.300" fill="#b8b8b8"/><rect x="246.5" y="645.85" width="660.8" height="1.300" fill="#b8b8b8"/><rect x="246.5" y="665.98" width="660.8" height="1.300" fill="#b8b8b8"/><rect x="246.5" y="686.11" width="660.8" height="1.300" fill="#b8b8b8"/><rect x="246.5" y="706.24" width="660.8" height="1.300" fill="#b8b8b8"/><rect x="246.5" y="726.37" width="660.8" height="1.300" fill="#b8b8b8"/><rect x="246.5" y="746.50" width="660.8" height="1.300" fill="#b8b8b8"/><rect x="246.5" y="766.63" width="660.8" height="1.300" fill="#b8b8b8"/><rect x="246.5" y="786.76" width="660.8" height="1.300" fill="#b8b8b8"/><rect x="246.5" y="806.89" width="660.8" height="1.300" fill="#b8b8b8"/><rect x="246.5" y="827.02" width="660.8" height="1.300" fill="#b8b8b8"/><rect x="246.5" y="847.15" width="660.8" height="1.300" fill="#b8b8b8"/></svg>
<div style="left:1560.8px;top:526px;width:11.8px;height:54px;background:#424242;"></div>
<svg style="left:0;top:0" width="1600" height="872" viewBox="0 0 1600 872" fill="none"><path d="M1458.500 554h57.500v-9.500l58 20.500-58 20.500v-9.500h-57.500z" stroke="#ed1c24" stroke-width="4.200" stroke-linejoin="round"/></svg>
<svg style="left:0;top:0" width="1600" height="872" viewBox="0 0 1600 872" fill="none" stroke-width="1.200"><path d="M1584.500 505.300h3l2.200 2.200v6.500h-8.300v-5" stroke="#d4d4d4"/><path d="M1584.200 509.500v4.500 M1586.900 508.500v5.500" stroke="#d4d4d4" stroke-width="1.100"/><path d="M1579.8 506.1h5.200 M1582.6 503.8l2.400 2.300-2.400 2.300" stroke="#55aef2" stroke-width="1.500" fill="none"/><path d="M1585.800 518.300c1.800.3 3 1.300 3.300 3" stroke="#d4d4d4"/><path d="M1581.600 522.500v4.600h2.800" stroke="#d4d4d4" stroke-width="1.300"/><rect x="1585.800" y="522.700" width="6" height="4.600" fill="#c8c8c8" stroke="#d4d4d4" stroke-width="0.800"/><path d="M1585.800 525h6 M1587.800 522.700v4.600 M1589.800 522.700v4.600" stroke="#555" stroke-width="0.500"/><path d="M1579.8 519.2h5.200 M1582.6 516.9000000000001l2.400 2.300-2.400 2.300" stroke="#55aef2" stroke-width="1.500" fill="none"/><path d="M1584.300 535.500c-1.600 0-.4 2.800-2.200 3.200 1.800.4.600 3.200 2.200 3.200 M1588.300 532.300c1.700 0 .5 4.200 2.400 4.700-1.900.5-.7 4.800-2.400 4.800" stroke="#d4d4d4" stroke-width="1.500"/><path d="M1579.8 532.9h5.200 M1582.6 530.6l2.400 2.300-2.400 2.300" stroke="#55aef2" stroke-width="1.500" fill="none"/><path d="M1584.600 548.600l-3.100 3.100 3.100 3.100 M1587.900 548l3.400 3.700-3.400 3.700" stroke="#d4d4d4" stroke-width="1.600"/><path d="M1579.8 546.1h5.200 M1582.6 543.8000000000001l2.400 2.300-2.400 2.300" stroke="#55aef2" stroke-width="1.500" fill="none"/><path d="M1581.400 562v6.500 M1584.100 564v4.500 M1586.800 558.200v10.300 M1589.900 561.500v7" stroke="#bcbcbc" stroke-width="1.700"/></svg>
<svg style="left:0;top:0" width="1600" height="872" viewBox="0 0 1600 872" fill="none" stroke="#ffffff" stroke-width="1.300" stroke-linejoin="round"><circle cx="10" cy="859.900" r="1.400" stroke-width="1.100"/><path d="M7.800 863.200h4.400l-.7 5.300h-3z" stroke-width="1.200"/><circle cx="34.950" cy="863.700" r="4.800"/><path d="M33.100 861.800l3.700 3.800 M36.800 861.800l-3.700 3.800" stroke-width="1.100"/><path d="M57.900 859.400l4.700 8.500h-9.400z"/><path d="M57.900 862.600v2.800 M57.900 866.200v.8" stroke-width="1.100"/></svg>
<svg style="left:0;top:0" width="1600" height="872" viewBox="0 0 1600 872" fill="none" stroke="#ffffff" stroke-width="1.300" stroke-linejoin="round"><path d="M1557 859.300h7.200v5h-2l-1.700 1.700"/><circle cx="1557.300" cy="863.700" r="1.900"/><path d="M1553.700 869.300c0-4.300 7.300-4.300 7.300 0"/><path d="M1579.700 866.200c1.300-1 1.400-1.900 1.400-3.900 0-5 5.800-5 5.800 0 0 2 .1 2.900 1.400 3.900z"/><path d="M1582.700 867.500c.4 1.200 2.200 1.200 2.600 0"/></svg>
<span class="t" style="left:28.05px;top:8.00px;font-size:10.9px;color:#d4d4d4;letter-spacing:-0.391px;-webkit-text-stroke:0.15px #d4d4d4;">File</span>
<span class="t" style="left:57.80px;top:8.00px;font-size:10.9px;color:#d4d4d4;letter-spacing:-0.258px;-webkit-text-stroke:0.15px #d4d4d4;">Edit</span>
<span class="t" style="left:89.10px;top:8.00px;font-size:10.9px;color:#d4d4d4;letter-spacing:-0.130px;-webkit-text-stroke:0.15px #d4d4d4;">View</span>
<span class="t" style="left:125.90px;top:8.00px;font-size:10.9px;color:#d4d4d4;letter-spacing:-0.102px;-webkit-text-stroke:0.15px #d4d4d4;">Help</span>
<span class="t" style="left:598.80px;top:9.00px;font-size:10.3px;color:#c8c8c8;letter-spacing:-0.601px;">SQLQuery_1</span>
<span class="t" style="left:658.20px;top:9.00px;font-size:10.3px;color:#c8c8c8;letter-spacing:-0.138px;">-</span>
<span class="t" style="left:663.00px;top:9.00px;font-size:10.3px;color:#c8c8c8;letter-spacing:-0.428px;">NIKOLAI\MSSQL03_2019.StackOverflow2013</span>
<span class="t" style="left:862.20px;top:9.00px;font-size:10.3px;color:#c8c8c8;letter-spacing:-0.078px;">(Integrated)</span>
<span class="t" style="left:917.70px;top:9.00px;font-size:10.3px;color:#c8c8c8;letter-spacing:-0.138px;">-</span>
<span class="t" style="left:924.10px;top:9.00px;font-size:10.3px;color:#c8c8c8;letter-spacing:-0.222px;">Azure Data Studio</span>
<span class="t" style="left:16.40px;top:179.00px;font-size:8.5px;color:#ffffff;font-weight:bold;">1</span>
<span class="t" style="left:48.70px;top:36.00px;font-size:9.3px;color:#bdbdbd;letter-spacing:-0.564px;-webkit-text-stroke:0.2px #bdbdbd;">CONNECTIONS</span>
<span class="t" style="left:48.70px;top:59.00px;font-size:9.5px;color:#ffffff;font-weight:bold;letter-spacing:-1.005px;">SERVERS</span>
<span class="t" style="left:74.40px;top:78.00px;font-size:10.5px;color:#f4f4f4;letter-spacing:-0.472px;-webkit-text-stroke:0.15px #f4f4f4;">NIKOLAI\MSSQL03_2019, &lt;default&gt;…</span>
<span class="t" style="left:82.85px;top:97.00px;font-size:10.5px;color:#f4f4f4;letter-spacing:-0.523px;-webkit-text-stroke:0.15px #f4f4f4;">Databases</span>
<span class="t" style="left:91.30px;top:117.00px;font-size:10.5px;color:#f4f4f4;letter-spacing:-0.520px;-webkit-text-stroke:0.15px #f4f4f4;">System Databases</span>
<span class="t" style="left:91.30px;top:136.00px;font-size:10.5px;color:#f4f4f4;letter-spacing:-0.377px;-webkit-text-stroke:0.15px #f4f4f4;">ContosoRetailDW</span>
<span class="t" style="left:91.30px;top:155.00px;font-size:10.5px;color:#f4f4f4;letter-spacing:-0.177px;-webkit-text-stroke:0.15px #f4f4f4;">DWConfiguration</span>
<span class="t" style="left:91.30px;top:174.00px;font-size:10.5px;color:#f4f4f4;letter-spacing:-0.352px;-webkit-text-stroke:0.15px #f4f4f4;">DWDiagnostics</span>
<span class="t" style="left:91.30px;top:194.00px;font-size:10.5px;color:#f4f4f4;letter-spacing:-0.476px;-webkit-text-stroke:0.15px #f4f4f4;">DWQueue</span>
<span class="t" style="left:91.30px;top:213.00px;font-size:10.5px;color:#f4f4f4;letter-spacing:-0.385px;-webkit-text-stroke:0.15px #f4f4f4;">StackOverflow2013</span>
<span class="t" style="left:99.75px;top:232.00px;font-size:10.5px;color:#f4f4f4;letter-spacing:-0.560px;-webkit-text-stroke:0.15px #f4f4f4;">Tables</span>
<span class="t" style="left:108.20px;top:251.00px;font-size:10.5px;color:#f4f4f4;letter-spacing:-0.376px;-webkit-text-stroke:0.15px #f4f4f4;">dbo.Badges</span>
<span class="t" style="left:108.20px;top:271.00px;font-size:10.5px;color:#f4f4f4;letter-spacing:-0.275px;-webkit-text-stroke:0.15px #f4f4f4;">dbo.Comments</span>
<span class="t" style="left:108.20px;top:290.00px;font-size:10.5px;color:#f4f4f4;letter-spacing:-0.371px;-webkit-text-stroke:0.15px #f4f4f4;">dbo.LinkTypes</span>
<span class="t" style="left:108.20px;top:309.00px;font-size:10.5px;color:#f4f4f4;letter-spacing:-0.398px;-webkit-text-stroke:0.15px #f4f4f4;">dbo.PostLinks</span>
<span class="t" style="left:108.20px;top:329.00px;font-size:10.5px;color:#f4f4f4;letter-spacing:-0.423px;-webkit-text-stroke:0.15px #f4f4f4;">dbo.Posts</span>
<span class="t" style="left:108.20px;top:348.00px;font-size:10.5px;color:#f4f4f4;letter-spacing:-0.411px;-webkit-text-stroke:0.15px #f4f4f4;">dbo.Posts_dt2</span>
<span class="t" style="left:108.20px;top:367.00px;font-size:10.5px;color:#f4f4f4;letter-spacing:-0.428px;-webkit-text-stroke:0.15px #f4f4f4;">dbo.PostTypes</span>
<span class="t" style="left:108.20px;top:386.00px;font-size:10.5px;color:#f4f4f4;letter-spacing:-0.440px;-webkit-text-stroke:0.15px #f4f4f4;">dbo.Users</span>
<span class="t" style="left:108.20px;top:406.00px;font-size:10.5px;color:#f4f4f4;letter-spacing:-0.280px;-webkit-text-stroke:0.15px #f4f4f4;">dbo.Votes</span>
<span class="t" style="left:108.20px;top:425.00px;font-size:10.5px;color:#f4f4f4;letter-spacing:-0.337px;-webkit-text-stroke:0.15px #f4f4f4;">dbo.VoteTypes</span>
<span class="t" style="left:99.75px;top:444.00px;font-size:10.5px;color:#f4f4f4;letter-spacing:-0.526px;-webkit-text-stroke:0.15px #f4f4f4;">Views</span>
<span class="t" style="left:99.75px;top:463.00px;font-size:10.5px;color:#f4f4f4;letter-spacing:-0.516px;-webkit-text-stroke:0.15px #f4f4f4;">Synonyms</span>
<span class="t" style="left:99.75px;top:483.00px;font-size:10.5px;color:#f4f4f4;letter-spacing:-0.144px;-webkit-text-stroke:0.15px #f4f4f4;">Programmability</span>
<span class="t" style="left:99.75px;top:502.00px;font-size:10.5px;color:#f4f4f4;letter-spacing:-0.507px;-webkit-text-stroke:0.15px #f4f4f4;">External Resources</span>
<span class="t" style="left:99.75px;top:521.00px;font-size:10.5px;color:#f4f4f4;letter-spacing:-0.411px;-webkit-text-stroke:0.15px #f4f4f4;">Service Broker</span>
<span class="t" style="left:99.75px;top:541.00px;font-size:10.5px;color:#f4f4f4;letter-spacing:-0.383px;-webkit-text-stroke:0.15px #f4f4f4;">Storage</span>
<span class="t" style="left:99.75px;top:560.00px;font-size:10.5px;color:#f4f4f4;letter-spacing:-0.330px;-webkit-text-stroke:0.15px #f4f4f4;">Security</span>
<span class="t" style="left:91.30px;top:579.00px;font-size:10.5px;color:#f4f4f4;letter-spacing:-0.837px;-webkit-text-stroke:0.15px #f4f4f4;">TSQL2012</span>
<span class="t" style="left:91.30px;top:598.00px;font-size:10.5px;color:#f4f4f4;letter-spacing:-0.150px;-webkit-text-stroke:0.15px #f4f4f4;">WideWorldImporters</span>
<span class="t" style="left:91.30px;top:618.00px;font-size:10.5px;color:#f4f4f4;letter-spacing:-0.190px;-webkit-text-stroke:0.15px #f4f4f4;">WideWorldImportersDW</span>
<span class="t" style="left:82.85px;top:637.00px;font-size:10.5px;color:#f4f4f4;letter-spacing:-0.342px;-webkit-text-stroke:0.15px #f4f4f4;">Security</span>
<span class="t" style="left:82.85px;top:656.00px;font-size:10.5px;color:#f4f4f4;letter-spacing:-0.397px;-webkit-text-stroke:0.15px #f4f4f4;">Server Objects</span>
<span class="t" style="left:48.75px;top:822.00px;font-size:9.5px;color:#ffffff;font-weight:bold;letter-spacing:-0.597px;">AZURE</span>
<span class="t" style="left:48.75px;top:841.00px;font-size:9.5px;color:#ffffff;font-weight:bold;letter-spacing:-0.680px;">SQL SERVER BIG DATA CLUSTERS</span>
<span class="t" style="left:272.90px;top:35.00px;font-size:10.8px;color:#ffffff;letter-spacing:-0.532px;-webkit-text-stroke:0.15px #ffffff;">SQLQuery_1</span>
<span class="t" style="left:336.20px;top:35.00px;font-size:10.8px;color:#ffffff;letter-spacing:-0.209px;-webkit-text-stroke:0.15px #ffffff;">-</span>
<span class="t" style="left:342.50px;top:35.00px;font-size:10.8px;color:#ffffff;letter-spacing:-0.254px;-webkit-text-stroke:0.15px #ffffff;">NIKOLA...grated)</span>
<span class="t" style="left:473.20px;top:35.00px;font-size:10.8px;color:#a6a6a6;font-style:italic;letter-spacing:-0.352px;">Settings</span>
<span class="t" style="left:272.00px;top:62.00px;font-size:9.4px;color:#d0d0d0;letter-spacing:-0.568px;">Run</span>
<span class="t" style="left:307.00px;top:62.00px;font-size:9.4px;color:#666666;letter-spacing:-0.365px;">Cancel</span>
<span class="t" style="left:355.00px;top:62.00px;font-size:9.4px;color:#d0d0d0;letter-spacing:-0.189px;">Disconnect</span>
<span class="t" style="left:419.80px;top:62.00px;font-size:9.4px;color:#d0d0d0;letter-spacing:-0.169px;">Change Connection</span>
<span class="t" style="left:511.70px;top:63.00px;font-size:10.4px;color:#ffffff;letter-spacing:-0.342px;">StackOverflow2013</span>
<span class="t" style="left:684.00px;top:62.00px;font-size:9.4px;color:#d0d0d0;letter-spacing:-0.321px;">Explain</span>
<span class="t" style="left:732.00px;top:62.00px;font-size:9.4px;color:#d0d0d0;letter-spacing:-0.416px;">Enable SQLCMD</span>
<span class="t m" style="left:271.30px;top:83.00px;font-size:10px;color:#8a8a8a;letter-spacing:-0.486px;">1</span>
<span class="t m" style="left:298.50px;top:83.00px;font-size:10px;color:#569cd6;letter-spacing:-0.473px;-webkit-text-stroke:0.2px #569cd6;">SELECT</span>
<span class="t m" style="left:337.21px;top:83.00px;font-size:10px;color:#569cd6;letter-spacing:-0.475px;-webkit-text-stroke:0.2px #569cd6;">top</span>
<span class="t m" style="left:359.33px;top:83.00px;font-size:10px;color:#b5cea8;letter-spacing:-0.475px;-webkit-text-stroke:0.2px #b5cea8;">100</span>
<span class="t m" style="left:381.45px;top:83.00px;font-size:10px;color:#e4e4e4;letter-spacing:-0.474px;-webkit-text-stroke:0.2px #e4e4e4;">U.Id</span>
<span class="t m" style="left:271.30px;top:96.00px;font-size:10px;color:#8a8a8a;letter-spacing:-0.486px;">2</span>
<span class="t m" style="left:320.62px;top:96.00px;font-size:10px;color:#e4e4e4;letter-spacing:-0.471px;-webkit-text-stroke:0.2px #e4e4e4;">,U.CreationDate</span>
<span class="t m" style="left:271.30px;top:109.00px;font-size:10px;color:#8a8a8a;letter-spacing:-0.486px;">3</span>
<span class="t m" style="left:320.62px;top:109.00px;font-size:10px;color:#e4e4e4;letter-spacing:-0.471px;-webkit-text-stroke:0.2px #e4e4e4;">,U.[Location]</span>
<span class="t m" style="left:271.30px;top:123.00px;font-size:10px;color:#8a8a8a;letter-spacing:-0.486px;">4</span>
<span class="t m" style="left:320.62px;top:123.00px;font-size:10px;color:#e4e4e4;letter-spacing:-0.471px;-webkit-text-stroke:0.2px #e4e4e4;">,U.Reputation</span>
<span class="t m" style="left:271.30px;top:136.00px;font-size:10px;color:#8a8a8a;letter-spacing:-0.486px;">5</span>
<span class="t m" style="left:320.62px;top:136.00px;font-size:10px;color:#e4e4e4;letter-spacing:-0.472px;-webkit-text-stroke:0.2px #e4e4e4;">,P.Title</span>
<span class="t m" style="left:271.30px;top:150.00px;font-size:10px;color:#8a8a8a;letter-spacing:-0.486px;">6</span>
<span class="t m" style="left:320.62px;top:150.00px;font-size:10px;color:#e4e4e4;letter-spacing:-0.471px;-webkit-text-stroke:0.2px #e4e4e4;">,P.ViewCount</span>
<span class="t m" style="left:271.30px;top:163.00px;font-size:10px;color:#8a8a8a;letter-spacing:-0.486px;">7</span>
<span class="t m" style="left:298.50px;top:163.00px;font-size:10px;color:#569cd6;letter-spacing:-0.474px;-webkit-text-stroke:0.2px #569cd6;">FROM</span>
<span class="t m" style="left:326.15px;top:163.00px;font-size:10px;color:#e4e4e4;letter-spacing:-0.473px;-webkit-text-stroke:0.2px #e4e4e4;">Users</span>
<span class="t m" style="left:359.33px;top:163.00px;font-size:10px;color:#569cd6;letter-spacing:-0.478px;-webkit-text-stroke:0.2px #569cd6;">AS</span>
<span class="t m" style="left:375.92px;top:163.00px;font-size:10px;color:#e4e4e4;letter-spacing:-0.486px;-webkit-text-stroke:0.2px #e4e4e4;">U</span>
<span class="t m" style="left:271.30px;top:177.00px;font-size:10px;color:#8a8a8a;letter-spacing:-0.486px;">8</span>
<span class="t m" style="left:298.50px;top:177.00px;font-size:10px;color:#569cd6;letter-spacing:-0.472px;-webkit-text-stroke:0.2px #569cd6;">INNER JOIN</span>
<span class="t m" style="left:359.33px;top:177.00px;font-size:10px;color:#e4e4e4;letter-spacing:-0.473px;-webkit-text-stroke:0.2px #e4e4e4;">Posts</span>
<span class="t m" style="left:392.51px;top:177.00px;font-size:10px;color:#569cd6;letter-spacing:-0.478px;-webkit-text-stroke:0.2px #569cd6;">AS</span>
<span class="t m" style="left:409.10px;top:177.00px;font-size:10px;color:#e4e4e4;letter-spacing:-0.486px;-webkit-text-stroke:0.2px #e4e4e4;">P</span>
<span class="t m" style="left:271.30px;top:190.00px;font-size:10px;color:#8a8a8a;letter-spacing:-0.486px;">9</span>
<span class="t m" style="left:320.62px;top:190.00px;font-size:10px;color:#569cd6;letter-spacing:-0.478px;-webkit-text-stroke:0.2px #569cd6;">ON</span>
<span class="t m" style="left:337.21px;top:190.00px;font-size:10px;color:#e4e4e4;letter-spacing:-0.472px;-webkit-text-stroke:0.2px #e4e4e4;">U.Id = P.OwnerUserId</span>
<span class="t" style="left:260.70px;top:481.00px;font-size:10.9px;color:#ffffff;font-weight:bold;letter-spacing:-0.649px;">Results</span>
<span class="t" style="left:316.90px;top:482.00px;font-size:10.9px;color:#8c8c8c;letter-spacing:-0.243px;">Messages</span>
<span class="t m" style="left:277.30px;top:509.00px;font-size:10px;color:#f0f0f0;letter-spacing:-0.478px;-webkit-text-stroke:0.3px #f0f0f0;">Id</span>
<span class="t m" style="left:305.40px;top:509.00px;font-size:10px;color:#f0f0f0;letter-spacing:-0.471px;-webkit-text-stroke:0.3px #f0f0f0;">CreationDate</span>
<span class="t m" style="left:449.10px;top:509.00px;font-size:10px;color:#f0f0f0;letter-spacing:-0.472px;-webkit-text-stroke:0.3px #f0f0f0;">Location</span>
<span class="t m" style="left:610.10px;top:509.00px;font-size:10px;color:#f0f0f0;letter-spacing:-0.472px;-webkit-text-stroke:0.3px #f0f0f0;">Reputation</span>
<span class="t m" style="left:673.90px;top:509.00px;font-size:10px;color:#f0f0f0;letter-spacing:-0.473px;-webkit-text-stroke:0.3px #f0f0f0;">Title</span>
<span class="t m" style="left:852.40px;top:509.00px;font-size:10px;color:#f0f0f0;letter-spacing:-0.472px;-webkit-text-stroke:0.3px #f0f0f0;">ViewCount</span>
<span class="t m" style="left:253.10px;top:534.00px;font-size:10px;color:#f6f6f6;letter-spacing:-0.486px;-webkit-text-stroke:0.35px #f6f6f6;">1</span>
<span class="t m" style="left:281.60px;top:534.00px;font-size:10px;color:#f6f6f6;letter-spacing:-0.478px;-webkit-text-stroke:0.35px #f6f6f6;">11</span>
<span class="t m" style="left:309.70px;top:534.00px;font-size:10px;color:#f6f6f6;letter-spacing:-0.471px;-webkit-text-stroke:0.35px #f6f6f6;">2008-08-01 00:59:11.147</span>
<span class="t m" style="left:453.40px;top:534.00px;font-size:10px;color:#f4f4f4;font-style:italic;letter-spacing:-0.474px;-webkit-text-stroke:0.35px #f4f4f4;">NULL</span>
<span class="t m" style="left:614.40px;top:534.00px;font-size:10px;color:#f6f6f6;letter-spacing:-0.474px;-webkit-text-stroke:0.35px #f6f6f6;">1890</span>
<span class="t m" style="left:678.20px;top:534.00px;font-size:10px;color:#f6f6f6;letter-spacing:-0.471px;-webkit-text-stroke:0.35px #f6f6f6;">Difference between Math.Floo…</span>
<span class="t m" style="left:856.70px;top:534.00px;font-size:10px;color:#f6f6f6;letter-spacing:-0.473px;-webkit-text-stroke:0.35px #f6f6f6;">108769</span>
<span class="t m" style="left:253.10px;top:554.00px;font-size:10px;color:#f6f6f6;letter-spacing:-0.486px;-webkit-text-stroke:0.35px #f6f6f6;">2</span>
<span class="t m" style="left:281.60px;top:554.00px;font-size:10px;color:#f6f6f6;letter-spacing:-0.486px;-webkit-text-stroke:0.35px #f6f6f6;">2</span>
<span class="t m" style="left:309.70px;top:554.00px;font-size:10px;color:#f6f6f6;letter-spacing:-0.471px;-webkit-text-stroke:0.35px #f6f6f6;">2008-07-31 14:22:31.287</span>
<span class="t m" style="left:453.40px;top:554.00px;font-size:10px;color:#f6f6f6;letter-spacing:-0.471px;-webkit-text-stroke:0.35px #f6f6f6;">Corvallis, OR</span>
<span class="t m" style="left:614.40px;top:554.00px;font-size:10px;color:#f6f6f6;letter-spacing:-0.474px;-webkit-text-stroke:0.35px #f6f6f6;">3491</span>
<span class="t m" style="left:678.20px;top:554.00px;font-size:10px;color:#f6f6f6;letter-spacing:-0.471px;-webkit-text-stroke:0.35px #f6f6f6;">Filling a DataSet or DataTab…</span>
<span class="t m" style="left:856.70px;top:554.00px;font-size:10px;color:#f6f6f6;letter-spacing:-0.473px;-webkit-text-stroke:0.35px #f6f6f6;">79087</span>
<span class="t m" style="left:253.10px;top:574.00px;font-size:10px;color:#f6f6f6;letter-spacing:-0.486px;-webkit-text-stroke:0.35px #f6f6f6;">3</span>
<span class="t m" style="left:281.60px;top:574.00px;font-size:10px;color:#f6f6f6;letter-spacing:-0.486px;-webkit-text-stroke:0.35px #f6f6f6;">2</span>
<span class="t m" style="left:309.70px;top:574.00px;font-size:10px;color:#f6f6f6;letter-spacing:-0.471px;-webkit-text-stroke:0.35px #f6f6f6;">2008-07-31 14:22:31.287</span>
<span class="t m" style="left:453.40px;top:574.00px;font-size:10px;color:#f6f6f6;letter-spacing:-0.471px;-webkit-text-stroke:0.35px #f6f6f6;">Corvallis, OR</span>
<span class="t m" style="left:614.40px;top:574.00px;font-size:10px;color:#f6f6f6;letter-spacing:-0.474px;-webkit-text-stroke:0.35px #f6f6f6;">3491</span>
<span class="t m" style="left:678.20px;top:574.00px;font-size:10px;color:#f6f6f6;letter-spacing:-0.472px;-webkit-text-stroke:0.35px #f6f6f6;">Binary Data in MySQL</span>
<span class="t m" style="left:856.70px;top:574.00px;font-size:10px;color:#f6f6f6;letter-spacing:-0.473px;-webkit-text-stroke:0.35px #f6f6f6;">65443</span>
<span class="t m" style="left:253.10px;top:595.00px;font-size:10px;color:#f6f6f6;letter-spacing:-0.486px;-webkit-text-stroke:0.35px #f6f6f6;">4</span>
<span class="t m" style="left:281.60px;top:595.00px;font-size:10px;color:#f6f6f6;letter-spacing:-0.478px;-webkit-text-stroke:0.35px #f6f6f6;">13</span>
<span class="t m" style="left:309.70px;top:595.00px;font-size:10px;color:#f6f6f6;letter-spacing:-0.471px;-webkit-text-stroke:0.35px #f6f6f6;">2008-08-01 04:18:04.943</span>
<span class="t m" style="left:453.40px;top:595.00px;font-size:10px;color:#f6f6f6;letter-spacing:-0.471px;-webkit-text-stroke:0.35px #f6f6f6;">Raleigh, NC, United States</span>
<span class="t m" style="left:614.40px;top:595.00px;font-size:10px;color:#f6f6f6;letter-spacing:-0.473px;-webkit-text-stroke:0.35px #f6f6f6;">177138</span>
<span class="t m" style="left:678.20px;top:595.00px;font-size:10px;color:#f6f6f6;letter-spacing:-0.471px;-webkit-text-stroke:0.35px #f6f6f6;">What is the fastest way to g…</span>
<span class="t m" style="left:856.70px;top:595.00px;font-size:10px;color:#f6f6f6;letter-spacing:-0.473px;-webkit-text-stroke:0.35px #f6f6f6;">42501</span>
<span class="t m" style="left:253.10px;top:615.00px;font-size:10px;color:#f6f6f6;letter-spacing:-0.486px;-webkit-text-stroke:0.35px #f6f6f6;">5</span>
<span class="t m" style="left:281.60px;top:615.00px;font-size:10px;color:#f6f6f6;letter-spacing:-0.478px;-webkit-text-stroke:0.35px #f6f6f6;">13</span>
<span class="t m" style="left:309.70px;top:615.00px;font-size:10px;color:#f6f6f6;letter-spacing:-0.471px;-webkit-text-stroke:0.35px #f6f6f6;">2008-08-01 04:18:04.943</span>
<span class="t m" style="left:453.40px;top:615.00px;font-size:10px;color:#f6f6f6;letter-spacing:-0.471px;-webkit-text-stroke:0.35px #f6f6f6;">Raleigh, NC, United States</span>
<span class="t m" style="left:614.40px;top:615.00px;font-size:10px;color:#f6f6f6;letter-spacing:-0.473px;-webkit-text-stroke:0.35px #f6f6f6;">177138</span>
<span class="t m" style="left:678.20px;top:615.00px;font-size:10px;color:#f4f4f4;font-style:italic;letter-spacing:-0.474px;-webkit-text-stroke:0.35px #f4f4f4;">NULL</span>
<span class="t m" style="left:856.70px;top:615.00px;font-size:10px;color:#f6f6f6;letter-spacing:-0.486px;-webkit-text-stroke:0.35px #f6f6f6;">0</span>
<span class="t m" style="left:253.10px;top:635.00px;font-size:10px;color:#f6f6f6;letter-spacing:-0.486px;-webkit-text-stroke:0.35px #f6f6f6;">6</span>
<span class="t m" style="left:281.60px;top:635.00px;font-size:10px;color:#f6f6f6;letter-spacing:-0.478px;-webkit-text-stroke:0.35px #f6f6f6;">13</span>
<span class="t m" style="left:309.70px;top:635.00px;font-size:10px;color:#f6f6f6;letter-spacing:-0.471px;-webkit-text-stroke:0.35px #f6f6f6;">2008-08-01 04:18:04.943</span>
<span class="t m" style="left:453.40px;top:635.00px;font-size:10px;color:#f6f6f6;letter-spacing:-0.471px;-webkit-text-stroke:0.35px #f6f6f6;">Raleigh, NC, United States</span>
<span class="t m" style="left:614.40px;top:635.00px;font-size:10px;color:#f6f6f6;letter-spacing:-0.473px;-webkit-text-stroke:0.35px #f6f6f6;">177138</span>
<span class="t m" style="left:678.20px;top:635.00px;font-size:10px;color:#f4f4f4;font-style:italic;letter-spacing:-0.474px;-webkit-text-stroke:0.35px #f4f4f4;">NULL</span>
<span class="t m" style="left:856.70px;top:635.00px;font-size:10px;color:#f6f6f6;letter-spacing:-0.486px;-webkit-text-stroke:0.35px #f6f6f6;">0</span>
<span class="t m" style="left:253.10px;top:655.00px;font-size:10px;color:#f6f6f6;letter-spacing:-0.486px;-webkit-text-stroke:0.35px #f6f6f6;">7</span>
<span class="t m" style="left:281.60px;top:655.00px;font-size:10px;color:#f6f6f6;letter-spacing:-0.478px;-webkit-text-stroke:0.35px #f6f6f6;">13</span>
<span class="t m" style="left:309.70px;top:655.00px;font-size:10px;color:#f6f6f6;letter-spacing:-0.471px;-webkit-text-stroke:0.35px #f6f6f6;">2008-08-01 04:18:04.943</span>
<span class="t m" style="left:453.40px;top:655.00px;font-size:10px;color:#f6f6f6;letter-spacing:-0.471px;-webkit-text-stroke:0.35px #f6f6f6;">Raleigh, NC, United States</span>
<span class="t m" style="left:614.40px;top:655.00px;font-size:10px;color:#f6f6f6;letter-spacing:-0.473px;-webkit-text-stroke:0.35px #f6f6f6;">177138</span>
<span class="t m" style="left:678.20px;top:655.00px;font-size:10px;color:#f4f4f4;font-style:italic;letter-spacing:-0.474px;-webkit-text-stroke:0.35px #f4f4f4;">NULL</span>
<span class="t m" style="left:856.70px;top:655.00px;font-size:10px;color:#f6f6f6;letter-spacing:-0.486px;-webkit-text-stroke:0.35px #f6f6f6;">0</span>
<span class="t m" style="left:253.10px;top:675.00px;font-size:10px;color:#f6f6f6;letter-spacing:-0.486px;-webkit-text-stroke:0.35px #f6f6f6;">8</span>
<span class="t m" style="left:281.60px;top:675.00px;font-size:10px;color:#f6f6f6;letter-spacing:-0.478px;-webkit-text-stroke:0.35px #f6f6f6;">13</span>
<span class="t m" style="left:309.70px;top:675.00px;font-size:10px;color:#f6f6f6;letter-spacing:-0.471px;-webkit-text-stroke:0.35px #f6f6f6;">2008-08-01 04:18:04.943</span>
<span class="t m" style="left:453.40px;top:675.00px;font-size:10px;color:#f6f6f6;letter-spacing:-0.471px;-webkit-text-stroke:0.35px #f6f6f6;">Raleigh, NC, United States</span>
<span class="t m" style="left:614.40px;top:675.00px;font-size:10px;color:#f6f6f6;letter-spacing:-0.473px;-webkit-text-stroke:0.35px #f6f6f6;">177138</span>
<span class="t m" style="left:678.20px;top:675.00px;font-size:10px;color:#f4f4f4;font-style:italic;letter-spacing:-0.474px;-webkit-text-stroke:0.35px #f4f4f4;">NULL</span>
<span class="t m" style="left:856.70px;top:675.00px;font-size:10px;color:#f6f6f6;letter-spacing:-0.486px;-webkit-text-stroke:0.35px #f6f6f6;">0</span>
<span class="t m" style="left:253.10px;top:695.00px;font-size:10px;color:#f6f6f6;letter-spacing:-0.486px;-webkit-text-stroke:0.35px #f6f6f6;">9</span>
<span class="t m" style="left:281.60px;top:695.00px;font-size:10px;color:#f6f6f6;letter-spacing:-0.486px;-webkit-text-stroke:0.35px #f6f6f6;">9</span>
<span class="t m" style="left:309.70px;top:695.00px;font-size:10px;color:#f6f6f6;letter-spacing:-0.471px;-webkit-text-stroke:0.35px #f6f6f6;">2008-07-31 21:35:26.517</span>
<span class="t m" style="left:453.40px;top:695.00px;font-size:10px;color:#f6f6f6;letter-spacing:-0.471px;-webkit-text-stroke:0.35px #f6f6f6;">Oakland, CA</span>
<span class="t m" style="left:614.40px;top:695.00px;font-size:10px;color:#f6f6f6;letter-spacing:-0.473px;-webkit-text-stroke:0.35px #f6f6f6;">14337</span>
<span class="t m" style="left:678.20px;top:695.00px;font-size:10px;color:#f4f4f4;font-style:italic;letter-spacing:-0.474px;-webkit-text-stroke:0.35px #f4f4f4;">NULL</span>
<span class="t m" style="left:856.70px;top:695.00px;font-size:10px;color:#f6f6f6;letter-spacing:-0.486px;-webkit-text-stroke:0.35px #f6f6f6;">0</span>
<span class="t m" style="left:253.10px;top:715.00px;font-size:10px;color:#f6f6f6;letter-spacing:-0.478px;-webkit-text-stroke:0.35px #f6f6f6;">10</span>
<span class="t m" style="left:281.60px;top:715.00px;font-size:10px;color:#f6f6f6;letter-spacing:-0.486px;-webkit-text-stroke:0.35px #f6f6f6;">5</span>
<span class="t m" style="left:309.70px;top:715.00px;font-size:10px;color:#f6f6f6;letter-spacing:-0.471px;-webkit-text-stroke:0.35px #f6f6f6;">2008-07-31 14:22:31.317</span>
<span class="t m" style="left:453.40px;top:715.00px;font-size:10px;color:#f6f6f6;letter-spacing:-0.471px;-webkit-text-stroke:0.35px #f6f6f6;">San Diego, CA</span>
<span class="t m" style="left:614.40px;top:715.00px;font-size:10px;color:#f6f6f6;letter-spacing:-0.473px;-webkit-text-stroke:0.35px #f6f6f6;">39172</span>
<span class="t m" style="left:678.20px;top:715.00px;font-size:10px;color:#f4f4f4;font-style:italic;letter-spacing:-0.474px;-webkit-text-stroke:0.35px #f4f4f4;">NULL</span>
<span class="t m" style="left:856.70px;top:715.00px;font-size:10px;color:#f6f6f6;letter-spacing:-0.486px;-webkit-text-stroke:0.35px #f6f6f6;">0</span>
<span class="t m" style="left:253.10px;top:735.00px;font-size:10px;color:#f6f6f6;letter-spacing:-0.478px;-webkit-text-stroke:0.35px #f6f6f6;">11</span>
<span class="t m" style="left:281.60px;top:735.00px;font-size:10px;color:#f6f6f6;letter-spacing:-0.486px;-webkit-text-stroke:0.35px #f6f6f6;">1</span>
<span class="t m" style="left:309.70px;top:735.00px;font-size:10px;color:#f6f6f6;letter-spacing:-0.471px;-webkit-text-stroke:0.35px #f6f6f6;">2008-07-31 14:22:31.287</span>
<span class="t m" style="left:453.40px;top:735.00px;font-size:10px;color:#f6f6f6;letter-spacing:-0.471px;-webkit-text-stroke:0.35px #f6f6f6;">El Cerrito, CA</span>
<span class="t m" style="left:614.40px;top:735.00px;font-size:10px;color:#f6f6f6;letter-spacing:-0.473px;-webkit-text-stroke:0.35px #f6f6f6;">44300</span>
<span class="t m" style="left:678.20px;top:735.00px;font-size:10px;color:#f4f4f4;font-style:italic;letter-spacing:-0.474px;-webkit-text-stroke:0.35px #f4f4f4;">NULL</span>
<span class="t m" style="left:856.70px;top:735.00px;font-size:10px;color:#f6f6f6;letter-spacing:-0.486px;-webkit-text-stroke:0.35px #f6f6f6;">0</span>
<span class="t m" style="left:253.10px;top:756.00px;font-size:10px;color:#f6f6f6;letter-spacing:-0.478px;-webkit-text-stroke:0.35px #f6f6f6;">12</span>
<span class="t m" style="left:281.60px;top:756.00px;font-size:10px;color:#f6f6f6;letter-spacing:-0.486px;-webkit-text-stroke:0.35px #f6f6f6;">1</span>
<span class="t m" style="left:309.70px;top:756.00px;font-size:10px;color:#f6f6f6;letter-spacing:-0.471px;-webkit-text-stroke:0.35px #f6f6f6;">2008-07-31 14:22:31.287</span>
<span class="t m" style="left:453.40px;top:756.00px;font-size:10px;color:#f6f6f6;letter-spacing:-0.471px;-webkit-text-stroke:0.35px #f6f6f6;">El Cerrito, CA</span>
<span class="t m" style="left:614.40px;top:756.00px;font-size:10px;color:#f6f6f6;letter-spacing:-0.473px;-webkit-text-stroke:0.35px #f6f6f6;">44300</span>
<span class="t m" style="left:678.20px;top:756.00px;font-size:10px;color:#f4f4f4;font-style:italic;letter-spacing:-0.474px;-webkit-text-stroke:0.35px #f4f4f4;">NULL</span>
<span class="t m" style="left:856.70px;top:756.00px;font-size:10px;color:#f6f6f6;letter-spacing:-0.486px;-webkit-text-stroke:0.35px #f6f6f6;">0</span>
<span class="t m" style="left:253.10px;top:776.00px;font-size:10px;color:#f6f6f6;letter-spacing:-0.478px;-webkit-text-stroke:0.35px #f6f6f6;">13</span>
<span class="t m" style="left:281.60px;top:776.00px;font-size:10px;color:#f6f6f6;letter-spacing:-0.486px;-webkit-text-stroke:0.35px #f6f6f6;">1</span>
<span class="t m" style="left:309.70px;top:776.00px;font-size:10px;color:#f6f6f6;letter-spacing:-0.471px;-webkit-text-stroke:0.35px #f6f6f6;">2008-07-31 14:22:31.287</span>
<span class="t m" style="left:453.40px;top:776.00px;font-size:10px;color:#f6f6f6;letter-spacing:-0.471px;-webkit-text-stroke:0.35px #f6f6f6;">El Cerrito, CA</span>
<span class="t m" style="left:614.40px;top:776.00px;font-size:10px;color:#f6f6f6;letter-spacing:-0.473px;-webkit-text-stroke:0.35px #f6f6f6;">44300</span>
<span class="t m" style="left:678.20px;top:776.00px;font-size:10px;color:#f4f4f4;font-style:italic;letter-spacing:-0.474px;-webkit-text-stroke:0.35px #f4f4f4;">NULL</span>
<span class="t m" style="left:856.70px;top:776.00px;font-size:10px;color:#f6f6f6;letter-spacing:-0.486px;-webkit-text-stroke:0.35px #f6f6f6;">0</span>
<span class="t m" style="left:253.10px;top:796.00px;font-size:10px;color:#f6f6f6;letter-spacing:-0.478px;-webkit-text-stroke:0.35px #f6f6f6;">14</span>
<span class="t m" style="left:281.60px;top:796.00px;font-size:10px;color:#f6f6f6;letter-spacing:-0.486px;-webkit-text-stroke:0.35px #f6f6f6;">2</span>
<span class="t m" style="left:309.70px;top:796.00px;font-size:10px;color:#f6f6f6;letter-spacing:-0.471px;-webkit-text-stroke:0.35px #f6f6f6;">2008-07-31 14:22:31.287</span>
<span class="t m" style="left:453.40px;top:796.00px;font-size:10px;color:#f6f6f6;letter-spacing:-0.471px;-webkit-text-stroke:0.35px #f6f6f6;">Corvallis, OR</span>
<span class="t m" style="left:614.40px;top:796.00px;font-size:10px;color:#f6f6f6;letter-spacing:-0.474px;-webkit-text-stroke:0.35px #f6f6f6;">3491</span>
<span class="t m" style="left:678.20px;top:796.00px;font-size:10px;color:#f6f6f6;letter-spacing:-0.471px;-webkit-text-stroke:0.35px #f6f6f6;">Why doesn&#x27;t SQL Full Text In…</span>
<span class="t m" style="left:856.70px;top:796.00px;font-size:10px;color:#f6f6f6;letter-spacing:-0.474px;-webkit-text-stroke:0.35px #f6f6f6;">7628</span>
<span class="t m" style="left:253.10px;top:816.00px;font-size:10px;color:#f6f6f6;letter-spacing:-0.478px;-webkit-text-stroke:0.35px #f6f6f6;">15</span>
<span class="t m" style="left:281.60px;top:816.00px;font-size:10px;color:#f6f6f6;letter-spacing:-0.486px;-webkit-text-stroke:0.35px #f6f6f6;">3</span>
<span class="t m" style="left:309.70px;top:816.00px;font-size:10px;color:#f6f6f6;letter-spacing:-0.471px;-webkit-text-stroke:0.35px #f6f6f6;">2008-07-31 14:22:31.287</span>
<span class="t m" style="left:453.40px;top:816.00px;font-size:10px;color:#f6f6f6;letter-spacing:-0.471px;-webkit-text-stroke:0.35px #f6f6f6;">Raleigh, NC, United States</span>
<span class="t m" style="left:614.40px;top:816.00px;font-size:10px;color:#f6f6f6;letter-spacing:-0.473px;-webkit-text-stroke:0.35px #f6f6f6;">13418</span>
<span class="t m" style="left:678.20px;top:816.00px;font-size:10px;color:#f4f4f4;font-style:italic;letter-spacing:-0.474px;-webkit-text-stroke:0.35px #f4f4f4;">NULL</span>
<span class="t m" style="left:856.70px;top:816.00px;font-size:10px;color:#f6f6f6;letter-spacing:-0.486px;-webkit-text-stroke:0.35px #f6f6f6;">0</span>
<span class="t m" style="left:253.10px;top:836.00px;font-size:10px;color:#f6f6f6;letter-spacing:-0.478px;-webkit-text-stroke:0.35px #f6f6f6;">16</span>
<span class="t m" style="left:281.60px;top:836.00px;font-size:10px;color:#f6f6f6;letter-spacing:-0.478px;-webkit-text-stroke:0.35px #f6f6f6;">13</span>
<span class="t m" style="left:309.70px;top:836.00px;font-size:10px;color:#f6f6f6;letter-spacing:-0.471px;-webkit-text-stroke:0.35px #f6f6f6;">2008-08-01 04:18:04.943</span>
<span class="t m" style="left:453.40px;top:836.00px;font-size:10px;color:#f6f6f6;letter-spacing:-0.471px;-webkit-text-stroke:0.35px #f6f6f6;">Raleigh, NC, United States</span>
<span class="t m" style="left:614.40px;top:836.00px;font-size:10px;color:#f6f6f6;letter-spacing:-0.473px;-webkit-text-stroke:0.35px #f6f6f6;">177138</span>
<span class="t m" style="left:678.20px;top:836.00px;font-size:10px;color:#f6f6f6;letter-spacing:-0.471px;-webkit-text-stroke:0.35px #f6f6f6;">A little diversion into floa…</span>
<span class="t m" style="left:856.70px;top:836.00px;font-size:10px;color:#f6f6f6;letter-spacing:-0.474px;-webkit-text-stroke:0.35px #f6f6f6;">1579</span>
<span class="t" style="left:43.70px;top:860.00px;font-size:10px;color:#ffffff;letter-spacing:0.037px;">0</span>
<span class="t" style="left:66.50px;top:860.00px;font-size:10px;color:#ffffff;letter-spacing:0.037px;">0</span>
<span class="t" style="left:962.40px;top:860.00px;font-size:10px;color:#ffffff;letter-spacing:-0.211px;-webkit-text-stroke:0.12px #ffffff;">Ln 6, Col 17</span>
<span class="t" style="left:1027.00px;top:860.00px;font-size:10px;color:#ffffff;letter-spacing:-0.387px;-webkit-text-stroke:0.12px #ffffff;">Spaces: 4</span>
<span class="t" style="left:1081.40px;top:860.00px;font-size:10px;color:#ffffff;letter-spacing:-0.289px;-webkit-text-stroke:0.12px #ffffff;">UTF-8</span>
<span class="t" style="left:1121.50px;top:860.00px;font-size:10px;color:#ffffff;letter-spacing:-0.981px;-webkit-text-stroke:0.12px #ffffff;">CRLF</span>
<span class="t" style="left:1157.00px;top:860.00px;font-size:10px;color:#ffffff;letter-spacing:-0.872px;-webkit-text-stroke:0.12px #ffffff;">SQL</span>
<span class="t" style="left:1188.00px;top:860.00px;font-size:10px;color:#ffffff;letter-spacing:-0.603px;-webkit-text-stroke:0.12px #ffffff;">MSSQL</span>
<span class="t" style="left:1234.00px;top:860.00px;font-size:10px;color:#ffffff;letter-spacing:-0.122px;-webkit-text-stroke:0.12px #ffffff;">100 rows</span>
<span class="t" style="left:1286.90px;top:860.00px;font-size:10px;color:#ffffff;letter-spacing:-0.267px;-webkit-text-stroke:0.12px #ffffff;">00:00:00</span>
<span class="t" style="left:1337.40px;top:860.00px;font-size:10px;color:#ffffff;letter-spacing:-0.241px;-webkit-text-stroke:0.12px #ffffff;">NIKOLAI\MSSQL03_2019 : StackOverflow2013</span>
</div></body></html>
